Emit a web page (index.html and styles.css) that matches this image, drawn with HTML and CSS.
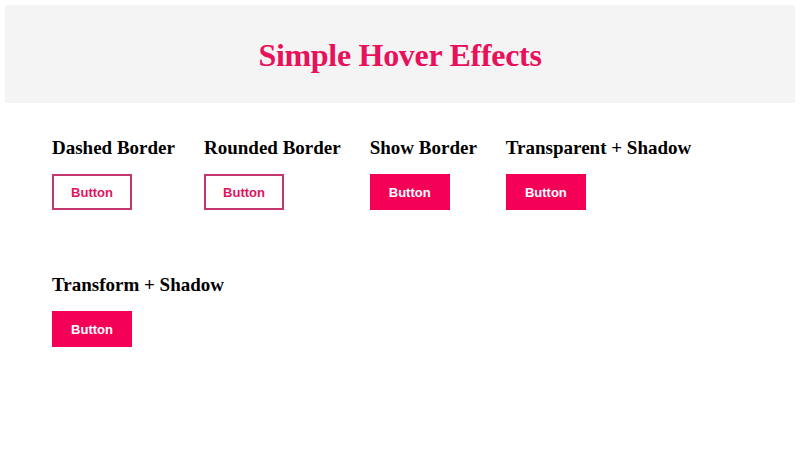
FILE: index.html
```html
<!DOCTYPE html>
<html lang="en">
<head>
    <meta charset="UTF-8">
    <meta name="viewport" content="width=device-width, initial-scale=1.0">
    <title>Simple Hover Effects</title>
    <link rel="stylesheet" href="styles.css">
</head>
<body>
    <!-- Header -->
    <header>
        <h1>Simple Hover Effects</h1>
    </header>

    <!-- Button demos -->
    <section class="demos">
        <div class="demo">
            <h3>Dashed Border</h3>
            <button class="btn btn-outline btn-dashed">Button</button>
        </div>
        <div class="demo">
            <h3>Rounded Border</h3>
            <button class="btn btn-outline btn-rounded">Button</button>
        </div>
        <div class="demo">
            <h3>Show Border</h3>
            <button class="btn btn-solid btn-show-border">Button</button>
        </div>
        <div class="demo">
            <h3>Transparent + Shadow</h3>
            <button class="btn btn-solid btn-transparent">Button</button>
        </div>
        <div class="demo demo-break">
            <h3>Transform + Shadow</h3>
            <button class="btn btn-solid btn-transform">Button</button>
        </div>
    </section>
</body>
</html>
```

FILE: styles.css
```css
* {
    margin: 0;
    padding: 0;
    box-sizing: border-box;
}

body {
    margin: 5px;
    background-color: #fff;
    color: #000;
    font-family: "Liberation Serif", "Times New Roman", serif;
}

header {
    background-color: #f4f4f4;
    height: 98px;
    display: flex;
    align-items: center;
    justify-content: center;
}

h1 {
    color: #e8115b;
    font-size: 32px;
    font-weight: bold;
    letter-spacing: -0.3px;
    padding-top: 2px;
}

.demos {
    display: flex;
    flex-wrap: wrap;
    column-gap: 29px;
    row-gap: 63px;
    padding: 33px 47px;
}

.demo h3 {
    font-size: 19px;
    line-height: 23px;
    margin-bottom: 15px;
}

.demo-break {
    flex-basis: 100%;
}

.btn {
    width: 80px;
    height: 36px;
    font-family: "Liberation Sans", Arial, sans-serif;
    font-size: 13px;
    font-weight: bold;
    cursor: pointer;
    transition: all 0.3s ease;
    display: block;
}

.btn-outline {
    background: #fff;
    color: #e0145e;
    border: 2px solid #c2386f;
}

.btn-solid {
    background: #f50057;
    color: #fff;
    border: none;
}

/* hover states */
.btn-dashed:hover {
    border-style: dashed;
}

.btn-rounded:hover {
    border-radius: 18px;
}

.btn-show-border:hover {
    background: #fff;
    color: #f50057;
    border: 2px solid #f50057;
}

.btn-transparent:hover {
    background: rgba(245, 0, 87, 0.7);
    box-shadow: 0 4px 10px rgba(0, 0, 0, 0.3);
}

.btn-transform:hover {
    transform: translateY(-4px);
    box-shadow: 0 6px 12px rgba(0, 0, 0, 0.3);
}
```
